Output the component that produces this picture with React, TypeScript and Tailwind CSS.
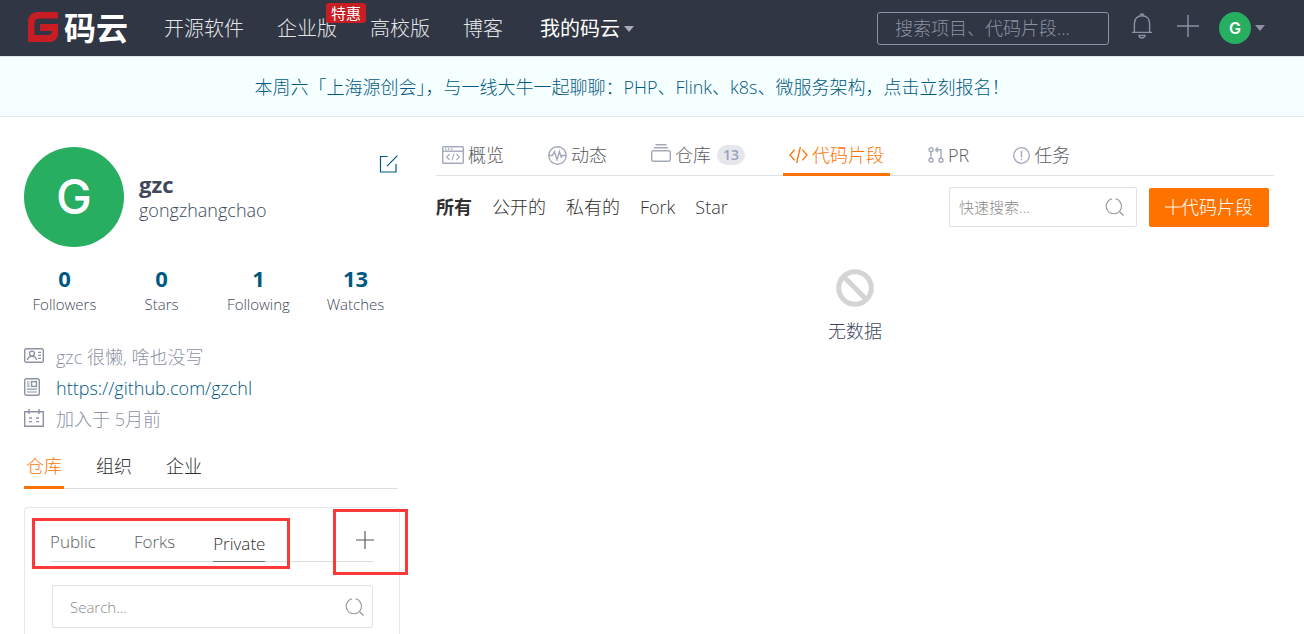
import type { ReactNode } from 'react';
import { clsx } from 'clsx';

interface IconProps {
  className?: string;
}

function Svg({ className, viewBox, children }: IconProps & { viewBox: string; children: ReactNode }) {
  return (
    <svg
      className={clsx('shrink-0', className)}
      viewBox={viewBox}
      fill="none"
      stroke="currentColor"
      strokeWidth={1.4}
      aria-hidden="true"
    >
      {children}
    </svg>
  );
}

function SearchIcon({ className }: IconProps) {
  return (
    <Svg className={className} viewBox="0 0 20 20">
      <path d="M7 1.8A7.6 7.6 0 1 0 10.6 1.8" strokeWidth={1.1} />
      <path d="M14.6 14.8l4 3.8" strokeWidth={1.4} />
    </Svg>
  );
}

const OverviewIcon = () => (
  <Svg className="h-[18px] w-[22px]" viewBox="0 0 22 18">
    <rect x="0.7" y="0.7" width="20.6" height="16.6" rx="1" />
    <path d="M1 5.2h20" />
    <path d="M3 3h1.4M6 3h1.4M9 3h1.4" />
    <path d="M7.6 8L4.6 11l3 3M14.4 8l3 3-3 3M12.2 7.6l-2.4 6.8" strokeWidth={1.1} />
  </Svg>
);

const ActivityIcon = () => (
  <Svg className="h-[19px] w-[19px]" viewBox="0 0 19 19">
    <circle cx="9.5" cy="9.5" r="8.7" />
    <path d="M1 9.5h3.4l2-4 2.6 8.2 2.4-8.2 1.8 5.6 1.2-1.6H18" />
  </Svg>
);

const RepoIcon = () => (
  <Svg className="-mt-1 h-5 w-5" viewBox="0 0 20 20">
    <path d="M4.500 1.700h11M3 4.700h14" />
    <rect x="0.7" y="7.7" width="18.6" height="10.6" rx="1.6" />
  </Svg>
);

const CodeIcon = () => (
  <Svg className="h-[18px] w-[19px]" viewBox="0 0 19 18">
    <path d="M5.600 3.600L1 9l4.600 5.400M13.400 3.600L18 9l-4.600 5.400M11.400 1L7.600 17" strokeWidth={1.3} />
  </Svg>
);

const PullIcon = () => (
  <Svg className="h-4 w-4" viewBox="0 0 16 16">
    <circle cx="3" cy="2.8" r="2" />
    <circle cx="3" cy="13.2" r="2" />
    <circle cx="13" cy="13.2" r="2" />
    <path d="M3 4.800v6.400M13 11.200V2.800H7.600M10 0.400L7.600 2.800 10 5.200" />
  </Svg>
);

const IssueIcon = () => (
  <Svg className="h-[17px] w-[17px]" viewBox="0 0 17 17">
    <circle cx="8.5" cy="8.5" r="7.8" strokeWidth={1.3} />
    <path d="M8.5 3.8v6.6M8.5 11.8v1.4" strokeWidth={1.4} />
  </Svg>
);

const BellIcon = () => (
  <Svg className="-mt-1 h-[26px] w-[22px]" viewBox="0 0 22 26">
    <path d="M1 19.4h20M3.4 19.2V10.4C3.4 5.6 6.6 2.8 11 2.8s7.6 2.8 7.6 7.6v8.800" />
    <path d="M9.4 2.6a1.6 1.6 0 0 1 3.2 0M8 22.4a3 2.4 0 0 0 6 0z" />
  </Svg>
);

const PlusIcon = ({ className }: IconProps) => (
  <Svg className={className} viewBox="0 0 22 22">
    <path d="M11 0v22M0 11h22" />
  </Svg>
);

const EditIcon = () => (
  <Svg className="h-[18px] w-[19px]" viewBox="0 0 19 18">
    <path d="M8.600 1.500H1.500v15.500H17V9M8 11.200L18.400 0.600" strokeWidth={1.2} />
  </Svg>
);

const BioIcon = () => (
  <Svg className="h-[15px] w-5" viewBox="0 0 20 15">
    <rect x="0.7" y="0.7" width="18.6" height="13.6" rx="1.6" />
    <circle cx="8" cy="5.6" r="2.5" />
    <path d="M3.4 12.2c.4-2.4 2-3.8 4.6-3.8s4.2 1.4 4.6 3.8M14 4.4h3M14 7.4h3M14 10.4h3" />
  </Svg>
);

const BlogIcon = () => (
  <Svg className="h-[18px] w-4" viewBox="0 0 16 18">
    <rect x="0.7" y="0.7" width="14.6" height="16.6" rx="1.8" />
    <rect x="7.6" y="3.6" width="4.8" height="4.8" />
    <path d="M3 4h2.6M3 6h2.6M3 8.2h2.6M3 11.2h10M3 14h10" strokeWidth={1.2} />
  </Svg>
);

const CalendarIcon = () => (
  <Svg className="h-[18px] w-5" viewBox="0 0 20 18">
    <path d="M0.7 2.7h18.6v14.6H0.7zM5 0v5M15 0v5" />
    <path d="M5 9h3M12 9h3M5 12.6h3M12 12.6h3" />
  </Svg>
);

const EmptyIcon = () => (
  <Svg className="h-[38px] w-[38px]" viewBox="0 0 38 38">
    <circle cx="19" cy="19" r="16.3" strokeWidth={5} />
    <path d="M7.6 7.6l22.8 22.8" strokeWidth={5} />
  </Svg>
);

const Caret = ({ className }: IconProps) => (
  <svg className={clsx('h-[6px] w-[10px] shrink-0', className)} viewBox="0 0 10 6" fill="currentColor" aria-hidden="true">
    <path d="M0 0h10L5 6z" />
  </svg>
);

function Logo() {
  return (
    <a href="#" className="flex items-center gap-1.5 text-white">
      <svg className="-mt-0.5 h-[30px] w-[30px]" viewBox="0 0 30 30" aria-hidden="true">
        <rect width="30" height="30" rx="1.500" fill="#c71d23" />
        <path d="M0 0h9A9 9 0 0 0 0 9z" fill="#303643" />
        <path d="M30 30h-8a8 8 0 0 0 8-8z" fill="#303643" />
        <path d="M30 6.500H11a4.500 4.500 0 0 0-4.500 4.500V23H20a4 4 0 0 0 4-4H12v-7h18z" fill="#303643" />
        <path d="M12 12h18V22H24v-4.500H12z" fill="#c71d23" />
      </svg>
      <span className="text-[32px] leading-8 font-bold">码云</span>
    </a>
  );
}

const stats = [
  { value: 0, label: 'Followers' },
  { value: 0, label: 'Stars' },
  { value: 1, label: 'Following' },
  { value: 13, label: 'Watches' },
];

const tabs = [
  { label: '概览', icon: <OverviewIcon /> },
  { label: '动态', icon: <ActivityIcon /> },
  { label: '仓库', icon: <RepoIcon />, count: 13 },
  { label: '代码片段', icon: <CodeIcon />, active: true },
  { label: 'PR', icon: <PullIcon /> },
  { label: '任务', icon: <IssueIcon /> },
];

const filters = ['所有', '公开的', '私有的', 'Fork', 'Star'];

function Header() {
  return (
    <header className="flex h-14 items-center bg-[#303643] pr-[39px] pl-7 text-xl text-[#e4e6e9]">
      <Logo />
      <nav className="ml-9 flex items-center gap-[33px] pt-0.5 whitespace-nowrap">
        <a href="#">开源软件</a>
        <a href="#" className="relative">
          企业版
          <span className="absolute -top-3 left-[49px] rounded-[3px] bg-[#c71d23] px-[5px] text-[15px] leading-5 font-normal text-white">
            特惠
          </span>
        </a>
        <a href="#">高校版</a>
        <a href="#">博客</a>
        <button type="button" className="ml-1 flex items-center gap-1 font-normal text-white">
          我的码云
          <Caret className="text-[#a8abb3]" />
        </button>
      </nav>
      <div className="ml-auto flex items-center">
        <input
          type="search"
          aria-label="搜索项目、代码片段"
          placeholder="搜索项目、代码片段..."
          className="h-[33px] w-[232px] rounded-[3px] border border-[#8c92a4] bg-transparent px-[17px] text-lg leading-6 placeholder:text-[#8c92a4]"
        />
        <button type="button" aria-label="通知" className="ml-[22px] text-[#8c92a4]">
          <BellIcon />
        </button>
        <button type="button" aria-label="新建" className="-mt-1 ml-6 text-[#8c92a4]">
          <PlusIcon className="h-[22px] w-[22px]" />
        </button>
        <button type="button" className="ml-5 flex items-center gap-1 text-[#8c92a4]">
          <span className="flex size-8 items-center justify-center rounded-full bg-[#27ae60] font-[Inter] text-base font-semibold text-white">
            G
          </span>
          <Caret />
        </button>
      </div>
    </header>
  );
}

function Sidebar() {
  return (
    <aside className="flex w-[376px] shrink-0 flex-col">
      <div className="flex items-center">
        <div className="flex size-[100px] shrink-0 items-center justify-center rounded-full bg-[#27ae60] font-[Inter] text-5xl font-medium text-white">
          G
        </div>
        <div className="ml-[15px]">
          <h1 className="text-[22px] leading-[26px] font-bold text-[#40485b]">gzc</h1>
          <p className="text-lg leading-[26px] text-[#40485b]">gongzhangchao</p>
        </div>
        <a href="#" aria-label="编辑资料" className="mt-2 mr-0.5 ml-auto self-start text-[#005980]">
          <EditIcon />
        </a>
      </div>

      <div className="-mr-1 -ml-2 mt-[17px] grid grid-cols-4 text-center">
        {stats.map((s) => (
          <a key={s.label} href="#">
            <div className="text-[22px] leading-7 font-bold text-[#005980]">{s.value}</div>
            <div className="text-[15px] leading-6 text-[#40485b]">{s.label}</div>
          </a>
        ))}
      </div>

      <ul className="mt-[26px] text-lg leading-[31px] text-[#8c92a4]">
        <li className="flex items-center">
          <span className="-mt-1 w-8"><BioIcon /></span>
          gzc 很懒, 啥也没写
        </li>
        <li className="flex items-center">
          <span className="-mt-1 w-8"><BlogIcon /></span>
          <a href="#" className="text-[#005980]">https://github.com/gzchl</a>
        </li>
        <li className="flex items-center">
          <span className="-mt-1 w-8"><CalendarIcon /></span>
          加入于 5月前
        </li>
      </ul>

      <div className="mt-[17px] mr-[3px] flex gap-[30px] border-b border-[#dcdddf] text-lg leading-7 text-[#303030]">
        <button type="button" className="-mb-px border-b-3 border-[#fe7300] px-0.5 pb-1.5 text-[#fe7300]">仓库</button>
        <button type="button" className="px-0.5 pb-2">组织</button>
        <button type="button" className="px-0.5 pb-2">企业</button>
      </div>

      <div className="relative mt-[18px] flex-1 rounded-t border border-b-0 border-[#e3e9ed] px-[25px]">
        <div className="mt-5 flex items-end border-b border-[#dcdddf] text-[17px] leading-[27px] text-[#5a5c60]">
          <button type="button" className="pb-1.5">Public</button>
          <button type="button" className="ml-[38px] pb-1.5">Forks</button>
          <button type="button" className="-mb-px ml-[38px] border-b border-[#777] pb-1 text-[#303030]">Private</button>
          <button type="button" aria-label="新建仓库" className="mb-3 ml-auto text-[#555]">
            <PlusIcon className="size-[18px]" />
          </button>
        </div>
        <div className="relative mt-[23px] mr-px ml-0.5">
          <input
            type="search"
            aria-label="Search"
            placeholder="Search..."
            className="h-[43px] w-full rounded-xs border border-[#dce2e8] px-[17px] text-[15px] placeholder:text-[#888]"
          />
          <SearchIcon className="absolute top-3 right-2 size-5 text-[#999]" />
        </div>
        {/* highlight frames */}
        <div className="pointer-events-none absolute top-2.5 left-[7px] h-[51px] w-[258px] border-3 border-[#fc3838]" />
        <div className="pointer-events-none absolute top-px -right-[9px] h-[66px] w-[75px] border-3 border-[#fc3838]" />
      </div>
    </aside>
  );
}

function Snippets() {
  return (
    <section className="min-w-0 flex-1">
      <nav className="flex gap-8 border-b border-[#e0e1e3] text-lg leading-7 whitespace-nowrap text-[#5a5c60]">
        {tabs.map((tab) => (
          <a
            key={tab.label}
            href="#"
            className={clsx(
              '-mb-px flex items-center gap-1 border-b-3 px-1.5 pb-1',
              tab.active ? 'border-[#fe7300] text-[#fe7300]' : 'border-transparent',
            )}
          >
            <span className={clsx(!tab.active && 'text-[#a3a9bb]')}>{tab.icon}</span>
            {tab.label}
            {tab.count && (
              <span className="ml-0.5 rounded-full bg-[#e6e7eb] px-1.5 text-sm leading-5 font-semibold text-[#96a2bd]">
                {tab.count}
              </span>
            )}
          </a>
        ))}
      </nav>

      <div className="mt-[11px] mr-[5px] flex items-center">
        <div className="flex gap-5 text-lg leading-7 whitespace-nowrap text-[#303030]">
          {filters.map((f, i) => (
            <a key={f} href="#" className={clsx(i === 0 && 'font-bold')}>
              {f}
            </a>
          ))}
        </div>
        <div className="relative ml-auto">
          <input
            type="search"
            aria-label="快速搜索"
            placeholder="快速搜索..."
            className="h-10 w-[188px] rounded-xs border border-[#dce2e8] px-[9px] text-[15px] placeholder:text-[#888]"
          />
          <SearchIcon className="absolute top-2.5 right-3 size-5 text-[#999]" />
        </div>
        <button
          type="button"
          className="ml-3 flex h-[39px] w-[120px] items-center justify-center rounded-xs bg-[#fe7300] text-lg text-white"
        >
          <PlusIcon className="size-4" />
          代码片段
        </button>
      </div>

      <div className="mt-[42px] flex flex-col items-center text-[#d4d4d4]">
        <EmptyIcon />
        <p className="mt-2.5 text-lg leading-7 text-[#40485b]">无数据</p>
      </div>
    </section>
  );
}

export default function App() {
  return (
    <div className="flex min-h-screen flex-col bg-white font-['Open_Sans','Noto_Sans_CJK_SC',sans-serif] font-light">
      <Header />
      <div className="border-y border-[#e1e7ea] bg-[#f6ffff] pt-4 pr-10 pb-[15px] text-center text-lg leading-7">
        <a href="#" className="text-[#005980]">
          本周六「上海源创会」，与一线大牛一起聊聊：PHP、Flink、k8s、微服务架构，点击立刻报名！
        </a>
      </div>
      <main className="flex flex-1 gap-9 pt-[30px] pr-[30px] pl-6">
        <Sidebar />
        <div className="-mt-1.5 flex min-w-0 flex-1">
          <Snippets />
        </div>
      </main>
    </div>
  );
}
